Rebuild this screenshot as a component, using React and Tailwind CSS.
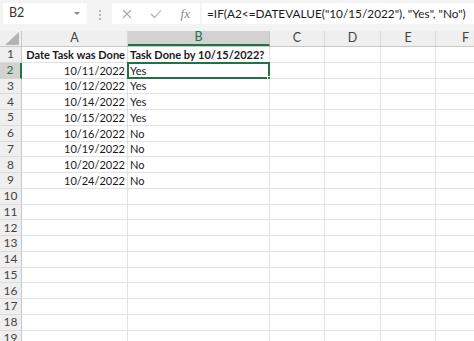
import React from "react";

const cols = [
  { key: "A", w: "w-[106px]" },
  { key: "B", w: "w-[142px]" },
  { key: "C", w: "w-[55px]" },
  { key: "D", w: "w-[56px]" },
  { key: "E", w: "w-[55px]" },
  { key: "F", w: "w-[60px]" },
];

const data = [
  ["Date Task was Done", "Task Done by 10/15/2022?"],
  ["10/11/2022", "Yes"],
  ["10/12/2022", "Yes"],
  ["10/14/2022", "Yes"],
  ["10/15/2022", "Yes"],
  ["10/16/2022", "No"],
  ["10/19/2022", "No"],
  ["10/20/2022", "No"],
  ["10/24/2022", "No"],
];

export default function App() {
  const rows = Array.from({ length: 19 }, (_, i) => i + 1);

  return (
    <div
      className="w-[474px] h-[341px] overflow-hidden bg-[#f3f3f3] text-[#1a1a1a]"
      style={{ fontFamily: "Lato, 'Open Sans', sans-serif" }}
    >
      {/* formula bar */}
      <div className="flex items-start h-[31px] pt-[3px] pl-[3px]">
        <div className="flex shrink-0 items-center justify-between w-[84px] h-[21px] bg-white pl-[6px] pr-[6px] text-[12.5px] text-[#333]">
          <span>B2</span>
          <svg width="8" height="5" viewBox="0 0 8 5">
            <path d="M1 1 L4 4 L7 1 Z" fill="#8a8a8a" />
          </svg>
        </div>
        <div className="flex shrink-0 flex-col gap-[2px] items-center w-[25px] pt-[7px]">
          <span className="w-[2px] h-[2px] bg-[#b8b8b8]" />
          <span className="w-[2px] h-[2px] bg-[#b8b8b8]" />
          <span className="w-[2px] h-[2px] bg-[#b8b8b8]" />
        </div>
        <div className="flex shrink-0 items-center justify-between w-[88px] h-[21px] bg-white pl-[10px] pr-[10px]">
          <svg width="10" height="10" viewBox="0 0 10 10">
            <path d="M1 1 L9 9 M9 1 L1 9" stroke="#a8a8a8" strokeWidth="1.1" />
          </svg>
          <svg width="12" height="10" viewBox="0 0 12 10">
            <path d="M1 5 L4.5 8.5 L11 1.5" stroke="#a8a8a8" strokeWidth="1.1" fill="none" />
          </svg>
          <span className="text-[13px] italic text-[#8a8a8a]" style={{ fontFamily: "'Liberation Serif', serif" }}>
            fx
          </span>
        </div>
        <div className="flex items-center flex-1 min-w-0 h-[21px] bg-white ml-[2px] pl-[5px] text-[11.8px] whitespace-nowrap overflow-hidden">
          =IF(A2&lt;=DATEVALUE("10/15/2022"), "Yes", "No")
        </div>
      </div>

      {/* grid */}
      <div className="bg-white">
        <div className="flex h-[16px] bg-[#efefef] border-b border-[#c8c8c8] text-[12.5px] text-[#444]">
          <div className="relative shrink-0 w-[22px] border-r border-[#c8c8c8]">
            <svg className="absolute right-[2px] bottom-[1px]" width="14" height="13" viewBox="0 0 14 13">
              <path d="M14 0 L14 13 L0 13 Z" fill="#b4b4b4" />
            </svg>
          </div>
          {cols.map((c) => (
            <div
              key={c.key}
              className={
                c.key === "B"
                  ? `${c.w} shrink-0 flex items-center justify-center leading-none bg-[#d2d2d2] border-r border-[#c8c8c8] border-b-2 border-b-[#217346] text-[#217346]`
                  : `${c.w} shrink-0 flex items-center justify-center leading-none border-r border-[#dadada]`
              }
            >
              {c.key}
            </div>
          ))}
        </div>

        {rows.map((r) => {
          const d = data[r - 1] || ["", ""];
          return (
            <div key={r} className="flex h-[15.75px] text-[11px] leading-none">
              <div
                className={
                  r === 2
                    ? "w-[22px] shrink-0 flex items-center justify-center text-[12px] bg-[#d2d2d2] text-[#217346] border-r-2 border-[#217346] border-b border-b-[#d6d6d6]"
                    : "w-[22px] shrink-0 flex items-center justify-center text-[12px] bg-[#efefef] text-[#444] border-r border-[#c8c8c8] border-b border-b-[#dcdcdc]"
                }
              >
                {r}
              </div>
              <div
                className={`w-[106px] shrink-0 flex items-center justify-end pr-[2px] border-r border-b border-[#e2e2e2] whitespace-nowrap ${
                  r === 1 ? "font-bold" : ""
                }`}
              >
                {d[0]}
              </div>
              <div
                className={`relative w-[142px] shrink-0 flex items-center pl-[2px] border-r border-b border-[#e2e2e2] whitespace-nowrap ${
                  r === 1 ? "font-bold" : ""
                }`}
              >
                {d[1]}
                {r === 2 && (
                  <div className="absolute -left-px -top-px -right-px -bottom-px border-2 border-[#217346]">
                    <span className="absolute -right-[3px] -bottom-[3px] w-[4px] h-[4px] bg-[#217346] border border-white" />
                  </div>
                )}
              </div>
              <div className="w-[55px] shrink-0 border-r border-b border-[#e2e2e2]" />
              <div className="w-[56px] shrink-0 border-r border-b border-[#e2e2e2]" />
              <div className="w-[55px] shrink-0 border-r border-b border-[#e2e2e2]" />
              <div className="w-[60px] shrink-0 border-r border-b border-[#e2e2e2]" />
            </div>
          );
        })}
      </div>
    </div>
  );
}
